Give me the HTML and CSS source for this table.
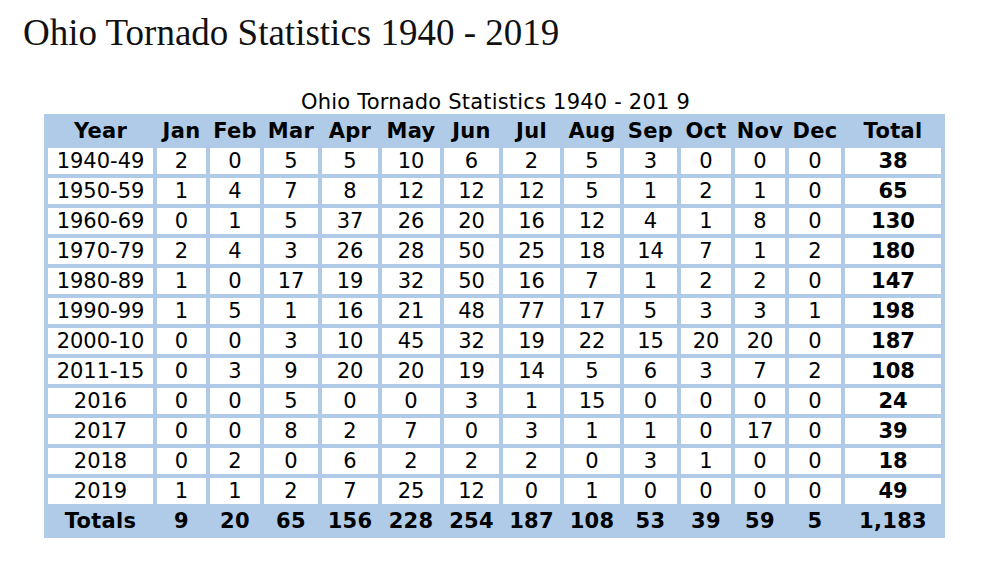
FILE: index.html
```html
<!DOCTYPE html>
<html lang="en">
<head>
<meta charset="utf-8">
<title>Ohio Tornado Statistics 1940 - 2019</title>
<link rel="stylesheet" href="styles.css">
</head>
<body>
<main class="page">
  <h1 class="title">Ohio Tornado Statistics 1940 - 2019</h1>
  <table class="stats">
    <caption class="stats-caption">Ohio Tornado Statistics 1940 - 201 9</caption>
    <colgroup>
      <col class="c-year"><col class="c-jan"><col class="c-feb"><col class="c-mar"><col class="c-apr"><col class="c-may"><col class="c-jun"><col class="c-jul"><col class="c-aug"><col class="c-sep"><col class="c-oct"><col class="c-nov"><col class="c-dec"><col class="c-total">
    </colgroup>
    <thead>
      <tr class="head-row"><th>Year</th><th>Jan</th><th>Feb</th><th>Mar</th><th>Apr</th><th>May</th><th>Jun</th><th>Jul</th><th>Aug</th><th>Sep</th><th>Oct</th><th>Nov</th><th>Dec</th><th>Total</th></tr>
    </thead>
    <tbody>
      <tr><td>1940-49</td><td>2</td><td>0</td><td>5</td><td>5</td><td>10</td><td>6</td><td>2</td><td>5</td><td>3</td><td>0</td><td>0</td><td>0</td><td class="sum">38</td></tr>
      <tr><td>1950-59</td><td>1</td><td>4</td><td>7</td><td>8</td><td>12</td><td>12</td><td>12</td><td>5</td><td>1</td><td>2</td><td>1</td><td>0</td><td class="sum">65</td></tr>
      <tr><td>1960-69</td><td>0</td><td>1</td><td>5</td><td>37</td><td>26</td><td>20</td><td>16</td><td>12</td><td>4</td><td>1</td><td>8</td><td>0</td><td class="sum">130</td></tr>
      <tr><td>1970-79</td><td>2</td><td>4</td><td>3</td><td>26</td><td>28</td><td>50</td><td>25</td><td>18</td><td>14</td><td>7</td><td>1</td><td>2</td><td class="sum">180</td></tr>
      <tr><td>1980-89</td><td>1</td><td>0</td><td>17</td><td>19</td><td>32</td><td>50</td><td>16</td><td>7</td><td>1</td><td>2</td><td>2</td><td>0</td><td class="sum">147</td></tr>
      <tr><td>1990-99</td><td>1</td><td>5</td><td>1</td><td>16</td><td>21</td><td>48</td><td>77</td><td>17</td><td>5</td><td>3</td><td>3</td><td>1</td><td class="sum">198</td></tr>
      <tr><td>2000-10</td><td>0</td><td>0</td><td>3</td><td>10</td><td>45</td><td>32</td><td>19</td><td>22</td><td>15</td><td>20</td><td>20</td><td>0</td><td class="sum">187</td></tr>
      <tr><td>2011-15</td><td>0</td><td>3</td><td>9</td><td>20</td><td>20</td><td>19</td><td>14</td><td>5</td><td>6</td><td>3</td><td>7</td><td>2</td><td class="sum">108</td></tr>
      <tr><td>2016</td><td>0</td><td>0</td><td>5</td><td>0</td><td>0</td><td>3</td><td>1</td><td>15</td><td>0</td><td>0</td><td>0</td><td>0</td><td class="sum">24</td></tr>
      <tr><td>2017</td><td>0</td><td>0</td><td>8</td><td>2</td><td>7</td><td>0</td><td>3</td><td>1</td><td>1</td><td>0</td><td>17</td><td>0</td><td class="sum">39</td></tr>
      <tr><td>2018</td><td>0</td><td>2</td><td>0</td><td>6</td><td>2</td><td>2</td><td>2</td><td>0</td><td>3</td><td>1</td><td>0</td><td>0</td><td class="sum">18</td></tr>
      <tr><td>2019</td><td>1</td><td>1</td><td>2</td><td>7</td><td>25</td><td>12</td><td>0</td><td>1</td><td>0</td><td>0</td><td>0</td><td>0</td><td class="sum">49</td></tr>
    </tbody>
    <tfoot>
      <tr class="foot-row"><th>Totals</th><th>9</th><th>20</th><th>65</th><th>156</th><th>228</th><th>254</th><th>187</th><th>108</th><th>53</th><th>39</th><th>59</th><th>5</th><th>1,183</th></tr>
    </tfoot>
  </table>
</main>
</body>
</html>
```

FILE: styles.css
```css
html, body {
  margin: 0;
  padding: 0;
  background: #ffffff;
  color: #000000;
}

.page {
  padding: 13px 0 0 23px;
}

.title {
  margin: 0;
  font-family: "Liberation Serif", "Times New Roman", serif;
  font-weight: normal;
  font-size: 37px;
  line-height: 40px;
  color: #111111;
}

.stats {
  margin: 37px 0 0 21px;
  table-layout: fixed;
  border-collapse: separate;
  border-spacing: 4px;
  background: #afcbe7;
  font-family: "DejaVu Sans", Verdana, sans-serif;
  font-size: 21px;
}

.stats-caption {
  caption-side: top;
  background: #ffffff;
  text-align: center;
  font-size: 21px;
  letter-spacing: 0.2px;
  line-height: 24px;
  padding-left: 2px;
}

.c-year { width: 105px; }
.c-jan { width: 49px; }
.c-feb { width: 50px; }
.c-mar { width: 54px; }
.c-apr { width: 56px; }
.c-may { width: 58px; }
.c-jun { width: 55px; }
.c-jul { width: 57px; }
.c-aug { width: 56px; }
.c-sep { width: 53px; }
.c-oct { width: 50px; }
.c-nov { width: 50px; }
.c-dec { width: 52px; }
.c-total { width: 96px; }

.stats th,
.stats td {
  height: 26px;
  padding: 0;
  text-align: center;
  vertical-align: middle;
  line-height: 24px;
  white-space: nowrap;
}

.stats td {
  background: #ffffff;
  font-weight: normal;
}

.stats th {
  background: #afcbe7;
  font-weight: bold;
  letter-spacing: 0.3px;
}

.stats td.sum {
  font-weight: bold;
}
```
